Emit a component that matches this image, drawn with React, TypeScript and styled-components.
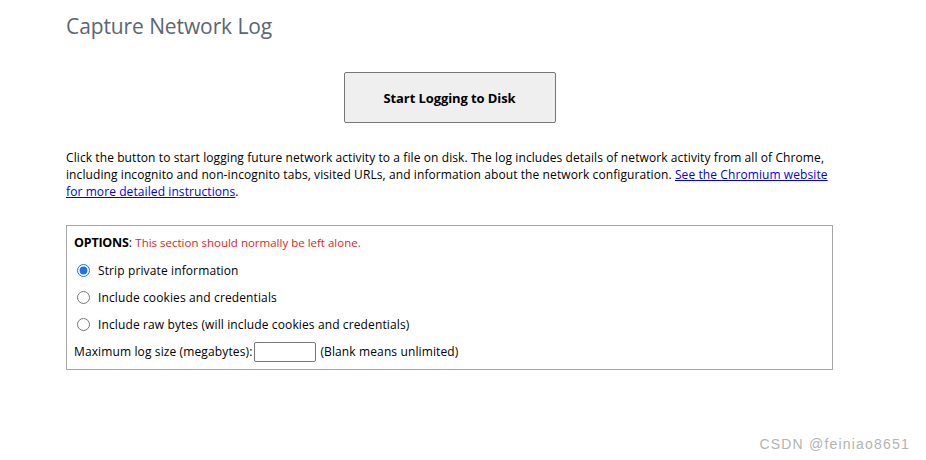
import React, { useState } from 'react'
import styled, { createGlobalStyle } from 'styled-components'

const GlobalStyle = createGlobalStyle`
  html, body {
    margin: 0;
    padding: 0;
    background: #ffffff;
  }
  body {
    font-family: 'Open Sans', 'Noto Sans', sans-serif;
    color: #000;
  }
`

const Page = styled.div`
  width: 926px;
  height: 460px;
  padding: 10px 0 0 66px;
  box-sizing: border-box;
  display: flex;
  flex-direction: column;
`

const Title = styled.h1`
  margin: 0;
  font-size: 21px;
  font-weight: 400;
  color: #5c6670;
  line-height: 32px;
  letter-spacing: -0.1px;
`

const ButtonRow = styled.div`
  width: 767px;
  display: flex;
  justify-content: center;
  margin-top: 30px;
`

const StartButton = styled.button`
  width: 212px;
  height: 51px;
  background: #efefef;
  border: 1px solid #767676;
  border-radius: 2px;
  font-family: 'Open Sans', 'Noto Sans', sans-serif;
  font-weight: 700;
  font-size: 13px;
  color: #000;
  letter-spacing: -0.1px;
  cursor: pointer;
`

const Intro = styled.p`
  width: 767px;
  margin: 26px 0 0;
  font-size: 12px;
  line-height: 17px;
  letter-spacing: 0.09px;
  white-space: nowrap;
`

const Link = styled.a`
  color: #0000ee;
  text-decoration: underline;
`

const Options = styled.fieldset`
  width: 767px;
  margin: 25px 0 0;
  padding: 8px 7px 4px;
  box-sizing: border-box;
  border: 1px solid #a6a6a6;
  display: flex;
  flex-direction: column;
  font-size: 12px;
  letter-spacing: 0.12px;
`

const Heading = styled.div`
  line-height: 18px;
  margin-bottom: 5px;
`

const Strong = styled.b`
  font-weight: 700;
  font-size: 12.5px;
  letter-spacing: -0.2px;
`

const Warning = styled.span`
  color: #e4221b;
  font-size: 11.5px;
  letter-spacing: 0;
`

const RadioRow = styled.label`
  display: flex;
  align-items: center;
  height: 27px;
  gap: 8px;
`

const Radio = styled.input`
  margin: 0 0 0 3px;
  width: 13px;
  height: 13px;
  accent-color: #1a73e8;
`

const SizeRow = styled.div`
  display: flex;
  align-items: center;
  height: 27px;
  gap: 2px;
`

const SizeInput = styled.input`
  width: 62px;
  height: 20px;
  box-sizing: border-box;
  border: 1px solid #767676;
  border-radius: 2px;
  padding: 0 3px;
  margin: 0 2px 0 0;
`

const Watermark = styled.div`
  position: absolute;
  right: 16px;
  bottom: 8px;
  font-family: 'Liberation Sans', Arial, sans-serif;
  font-size: 14px;
  letter-spacing: 1.2px;
  color: #b3b3b3;
`

const choices = [
  'Strip private information',
  'Include cookies and credentials',
  'Include raw bytes (will include cookies and credentials)',
]

export default function App() {
  const [mode, setMode] = useState(0)
  return (
    <>
      <GlobalStyle />
      <Page>
        <Title>Capture Network Log</Title>
        <ButtonRow>
          <StartButton>Start Logging to Disk</StartButton>
        </ButtonRow>
        <Intro>
          Click the button to start logging future network activity to a file on disk. The log includes details of network activity from all of Chrome,
          <br />
          including incognito and non-incognito tabs, visited URLs, and information about the network configuration.{' '}
          <Link href="#">
            See the Chromium website
            <br />
            for more detailed instructions
          </Link>
          .
        </Intro>
        <Options>
          <Heading>
            <Strong>OPTIONS</Strong>: <Warning>This section should normally be left alone.</Warning>
          </Heading>
          {choices.map((c, i) => (
            <RadioRow key={c}>
              <Radio type="radio" name="mode" checked={mode === i} onChange={() => setMode(i)} />
              {c}
            </RadioRow>
          ))}
          <SizeRow>
            Maximum log size (megabytes): <SizeInput type="text" /> (Blank means unlimited)
          </SizeRow>
        </Options>
      </Page>
      <Watermark>CSDN @feiniao8651</Watermark>
    </>
  )
}
